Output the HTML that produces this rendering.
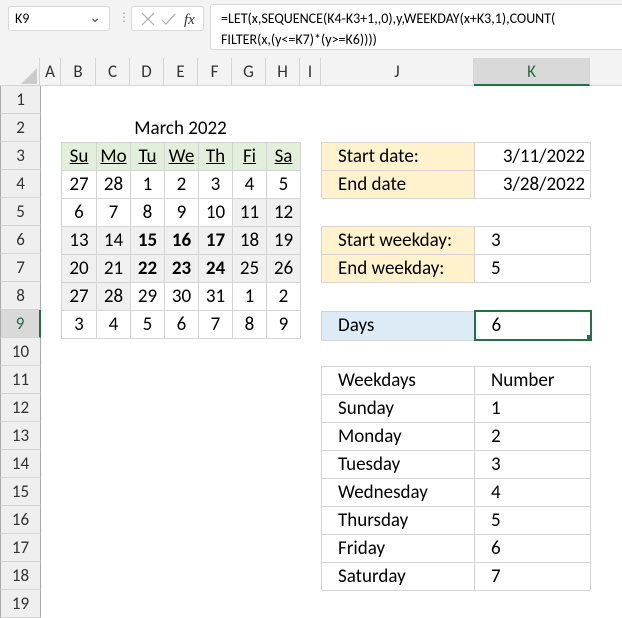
<!DOCTYPE html>
<html><head><meta charset="utf-8"><style>
*{margin:0;padding:0;box-sizing:border-box}
body{width:622px;height:617px;overflow:hidden;background:#fff;font-family:Calibri,Carlito,"Liberation Sans",sans-serif;position:relative;color:#000}
.a{position:absolute}
.top{left:0;top:0;width:622px;height:58px;background:#f3f3f3}
.nb{left:8px;top:6px;width:102px;height:25px;background:#fff;border:1px solid #d8d8d8;border-radius:3px;font-size:14px;padding:3px 6px}
.fb{left:110px;top:6px;width:94px;height:25px;background:#fff;border:1px solid #d8d8d8;border-radius:3px}
.fx{left:210px;top:4px;width:420px;height:46px;background:#fff;border:1px solid #d8d8d8;border-radius:3px;font-size:14px;line-height:21px;padding:3px 10px}
.ch{top:58px;height:28px;background:#f3f3f3;border-right:1px solid #d4d4d4;border-bottom:1px solid #d4d4d4;font-size:17px;color:#333;text-align:center;line-height:28px}
.rh{left:0;width:41px;height:28px;background:#efefef;border-left:1px solid #aaa;border-right:1px solid #aaa;border-bottom:1px solid #d4d4d4;font-size:17px;color:#333;text-align:center;line-height:28px}
.g{background:#f0f0f0}
.h{background:#e2efda;text-decoration:underline}
.b{font-weight:bold}
.y{background:#fff2cc}
.l{text-align:left;padding-left:16px}
td{border:1px solid #d4d4d4;height:28px;text-align:center;padding:0;line-height:27px}
</style></head><body>
<div class="a top"></div>
<div class="a nb">K9<span style="position:absolute;right:8px;top:2px;color:#555">&#8964;</span></div>
<div class="a" style="left:118px;top:10px;color:#999;font-size:12px">&#8942;</div>
<div class="a fb" style="left:131px;width:73px"><svg width="73" height="25"><path d="M10 6l12 12M22 6l-12 12M30 13l4 4 9-10" stroke="#aaa" fill="none" stroke-width="1.2"/><text x="52" y="17" font-family="Liberation Serif" font-style="italic" font-size="15" fill="#333">fx</text></svg></div>
<div class="a fx">=LET(x,SEQUENCE(K4-K3+1,,0),y,WEEKDAY(x+K3,1),COUNT(<br>FILTER(x,(y&lt;=K7)*(y&gt;=K6))))</div>
<div class="a ch" style="left:0;width:40px;background:#f3f3f3"><svg width="38" height="27" style="position:absolute;left:0;top:0"><path d="M21 26L37 10V26Z" fill="#ccc"/></svg></div>
<div class="a ch" style="left:40px;width:21px">A</div>
<div class="a ch" style="left:61px;width:35px">B</div>
<div class="a ch" style="left:96px;width:34px">C</div>
<div class="a ch" style="left:130px;width:34px">D</div>
<div class="a ch" style="left:164px;width:34px">E</div>
<div class="a ch" style="left:198px;width:34px">F</div>
<div class="a ch" style="left:232px;width:34px">G</div>
<div class="a ch" style="left:266px;width:34px">H</div>
<div class="a ch" style="left:300px;width:21px">I</div>
<div class="a ch" style="left:321px;width:153px">J</div>
<div class="a ch" style="left:474px;width:116px;background:#d9d9d9;color:#1e6e42;border-bottom:2px solid #217346">K</div>
<div class="a ch" style="left:590px;width:40px"></div>

<div class="a rh" style="top:86px">1</div><div class="a rh" style="top:114px">2</div><div class="a rh" style="top:142px">3</div><div class="a rh" style="top:170px">4</div><div class="a rh" style="top:198px">5</div><div class="a rh" style="top:226px">6</div><div class="a rh" style="top:254px">7</div><div class="a rh" style="top:282px">8</div>
<div class="a rh" style="top:310px;background:#d9d9d9;color:#1e6e42;border-right:2px solid #217346">9</div>
<div class="a rh" style="top:338px">10</div><div class="a rh" style="top:366px">11</div><div class="a rh" style="top:394px">12</div><div class="a rh" style="top:422px">13</div><div class="a rh" style="top:450px">14</div><div class="a rh" style="top:478px">15</div><div class="a rh" style="top:506px">16</div><div class="a rh" style="top:534px">17</div><div class="a rh" style="top:562px">18</div><div class="a rh" style="top:590px">19</div>

<div class="a" style="left:61px;top:117px;width:239px;text-align:center;font-size:19px">March 2022</div>
<table class="a" style="left:61px;top:142px;border-collapse:collapse;font-size:19px">
<colgroup><col style="width:35px"><col style="width:34px"><col style="width:34px"><col style="width:34px"><col style="width:34px"><col style="width:34px"><col style="width:34px"></colgroup>
<tr><td class="h">Su</td><td class="h">Mo</td><td class="h">Tu</td><td class="h">We</td><td class="h">Th</td><td class="h">Fi</td><td class="h">Sa</td></tr>
<tr><td>27</td><td>28</td><td>1</td><td>2</td><td>3</td><td>4</td><td>5</td></tr>
<tr><td>6</td><td>7</td><td>8</td><td>9</td><td>10</td><td class="g">11</td><td class="g">12</td></tr>
<tr><td class="g">13</td><td class="g">14</td><td class="g b">15</td><td class="g b">16</td><td class="g b">17</td><td class="g">18</td><td class="g">19</td></tr>
<tr><td class="g">20</td><td class="g">21</td><td class="g b">22</td><td class="g b">23</td><td class="g b">24</td><td class="g">25</td><td class="g">26</td></tr>
<tr><td class="g">27</td><td class="g">28</td><td>29</td><td>30</td><td>31</td><td>1</td><td>2</td></tr>
<tr><td>3</td><td>4</td><td>5</td><td>6</td><td>7</td><td>8</td><td>9</td></tr>
</table>

<table class="a" style="left:321px;top:142px;border-collapse:collapse;font-size:19px">
<tr><td class="y l" style="width:153px">Start date:</td><td style="width:116px;text-align:right;padding-right:5px">3/11/2022</td></tr>
<tr><td class="y l">End date</td><td style="text-align:right;padding-right:5px">3/28/2022</td></tr>
</table>
<table class="a" style="left:321px;top:226px;border-collapse:collapse;font-size:19px">
<tr><td class="y l" style="width:153px">Start weekday:</td><td style="width:116px;text-align:left;padding-left:16px">3</td></tr>
<tr><td class="y l">End weekday:</td><td style="text-align:left;padding-left:16px">5</td></tr>
</table>
<table class="a" style="left:321px;top:310px;border-collapse:collapse;font-size:19px">
<tr><td class="l" style="width:153px;background:#ddebf7">Days</td><td style="width:116px;text-align:left;padding-left:16px;border:2px solid #217346">6</td></tr>
</table>
<div class="a" style="left:587px;top:335px;width:5px;height:5px;background:#217346"></div>
<table class="a" style="left:321px;top:366px;border-collapse:collapse;font-size:19px">
<tr><td class="l" style="width:153px">Weekdays</td><td class="l" style="width:116px">Number</td></tr>
<tr><td class="l">Sunday</td><td class="l">1</td></tr>
<tr><td class="l">Monday</td><td class="l">2</td></tr>
<tr><td class="l">Tuesday</td><td class="l">3</td></tr>
<tr><td class="l">Wednesday</td><td class="l">4</td></tr>
<tr><td class="l">Thursday</td><td class="l">5</td></tr>
<tr><td class="l">Friday</td><td class="l">6</td></tr>
<tr><td class="l">Saturday</td><td class="l">7</td></tr>
</table>
</body></html>
